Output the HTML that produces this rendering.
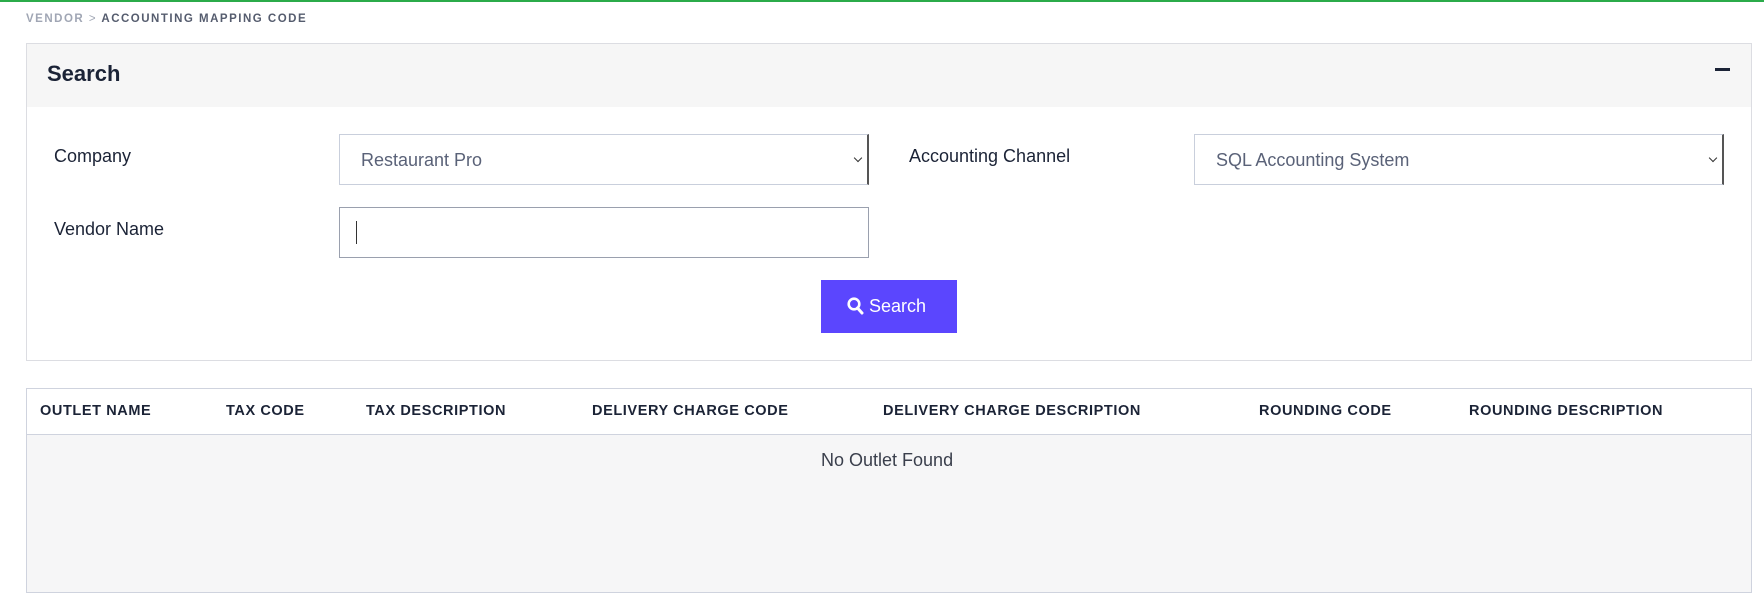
<!DOCTYPE html>
<html><head><meta charset="utf-8"><style>
*{box-sizing:border-box;margin:0;padding:0}
body{width:1764px;height:604px;background:#fff;font-family:"Liberation Sans",sans-serif;position:relative;overflow:hidden;color:#1b2336}
.a{position:absolute;white-space:nowrap}
.top{position:absolute;left:0;top:0;width:1764px;height:2px;background:#2bab4a}
.bc{left:26px;top:13px;font-size:11.5px;font-weight:bold;letter-spacing:1.5px;color:#555c6e}
.bc span{color:#a0a6b4}
.card{position:absolute;left:26px;width:1726px;border:1px solid #dcdde2}
.hd{position:absolute;left:0;top:0;width:100%;height:63px;background:#f6f6f6}
.lbl{font-size:18px;color:#1b2336}
.sel{position:absolute;border:1px solid #c9cfdc;background:#fff;height:51px;width:530px;font-size:18px;color:#5a6278;padding:15px 0 0 21px}
.sel.s:after{content:"";position:absolute;right:6px;top:20px;width:5px;height:5px;border-right:1.5px solid #333;border-bottom:1.5px solid #333;transform:rotate(45deg)}
.sel.s{border-right:2px solid #555}
.th{top:403px;font-size:14.5px;font-weight:bold;letter-spacing:0.6px;color:#1b2336}
</style></head><body>
<div class="top"></div>
<div class="a bc"><span>VENDOR</span> <span style="font-weight:normal">&gt;</span> ACCOUNTING MAPPING CODE</div>
<div class="card" style="top:43px;height:318px">
 <div class="hd"></div>
 <div class="a" style="left:20px;top:17px;font-size:22px;font-weight:bold;color:#1b2336">Search</div>
 <div class="a" style="left:1688px;top:24px;width:15px;height:3px;background:#1b2336"></div>
</div>
<div class="a lbl" style="left:54px;top:146px">Company</div>
<div class="sel s" style="left:339px;top:134px">Restaurant Pro</div>
<div class="a lbl" style="left:909px;top:146px">Accounting Channel</div>
<div class="sel s" style="left:1194px;top:134px">SQL Accounting System</div>
<div class="a lbl" style="left:54px;top:219px">Vendor Name</div>
<div class="sel" style="left:339px;top:207px;border-color:#9aa0ae"><div style="position:absolute;left:16px;top:13px;width:1px;height:23px;background:#333"></div></div>
<div class="a" style="left:821px;top:280px;width:136px;height:53px;background:#5b46fe;color:#fff;font-size:18px;padding:16px 0 0 26px">
 <svg width="17" height="18" viewBox="0 0 17 18" style="position:absolute;left:26px;top:17px"><circle cx="7" cy="7" r="5.3" fill="none" stroke="#fff" stroke-width="2.6"/><path d="M10.5 11 L15 16" stroke="#fff" stroke-width="3" stroke-linecap="round"/></svg>
 <span style="margin-left:22px">Search</span>
</div>
<div class="card" style="top:388px;height:205px;background:#f6f6f7;border-color:#cfd3de">
 <div style="position:absolute;left:0;top:0;width:100%;height:46px;background:#fff;border-bottom:1px solid #cfd3de"></div>
</div>
<div class="a th" style="left:40px">OUTLET NAME</div>
<div class="a th" style="left:226px">TAX CODE</div>
<div class="a th" style="left:366px">TAX DESCRIPTION</div>
<div class="a th" style="left:592px">DELIVERY CHARGE CODE</div>
<div class="a th" style="left:883px">DELIVERY CHARGE DESCRIPTION</div>
<div class="a th" style="left:1259px">ROUNDING CODE</div>
<div class="a th" style="left:1469px">ROUNDING DESCRIPTION</div>
<div class="a" style="left:821px;top:450px;font-size:18px;color:#3a3f4c">No Outlet Found</div>
</body></html>
